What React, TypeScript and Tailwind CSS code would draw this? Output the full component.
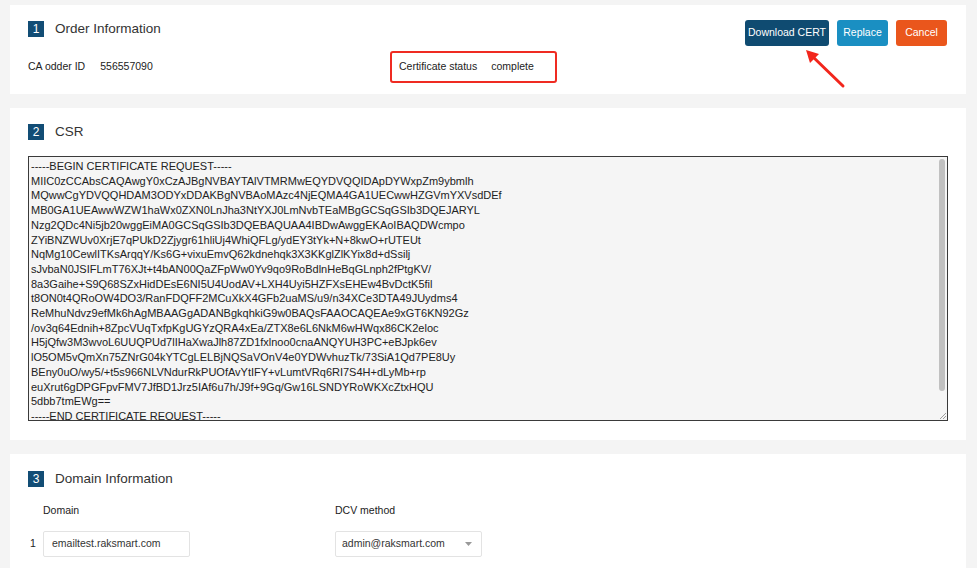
import React from 'react';

const csrLines = [
  '-----BEGIN CERTIFICATE REQUEST-----',
  'MIIC0zCCAbsCAQAwgY0xCzAJBgNVBAYTAlVTMRMwEQYDVQQIDApDYWxpZm9ybmlh',
  'MQwwCgYDVQQHDAM3ODYxDDAKBgNVBAoMAzc4NjEQMA4GA1UECwwHZGVmYXVsdDEf',
  'MB0GA1UEAwwWZW1haWx0ZXN0LnJha3NtYXJ0LmNvbTEaMBgGCSqGSIb3DQEJARYL',
  'Nzg2QDc4Ni5jb20wggEiMA0GCSqGSIb3DQEBAQUAA4IBDwAwggEKAoIBAQDWcmpo',
  'ZYiBNZWUv0XrjE7qPUkD2Zjygr61hliUj4WhiQFLg/ydEY3tYk+N+8kwO+rUTEUt',
  'NqMg10CewlITKsArqqY/Ks6G+vixuEmvQ62kdnehqk3X3KKglZlKYix8d+dSsilj',
  'sJvbaN0JSIFLmT76XJt+t4bAN00QaZFpWw0Yv9qo9RoBdlnHeBqGLnph2fPtgKV/',
  '8a3Gaihe+S9Q68SZxHidDEsE6NI5U4UodAV+LXH4Uyi5HZFXsEHEw4BvDctK5fil',
  't8ON0t4QRoOW4DO3/RanFDQFF2MCuXkX4GFb2uaMS/u9/n34XCe3DTA49JUydms4',
  'ReMhuNdvz9efMk6hAgMBAAGgADANBgkqhkiG9w0BAQsFAAOCAQEAe9xGT6KN92Gz',
  '/ov3q64Ednih+8ZpcVUqTxfpKgUGYzQRA4xEa/ZTX8e6L6NkM6wHWqx86CK2eloc',
  'H5jQfw3M3wvoL6UUQPUd7lIHaXwaJlh87ZD1fxlnoo0cnaANQYUH3PC+eBJpk6ev',
  'lO5OM5vQmXn75ZNrG04kYTCgLELBjNQSaVOnV4e0YDWvhuzTk/73SiA1Qd7PE8Uy',
  'BEny0uO/wy5/+t5s966NLVNdurRkPUOfAvYtIFY+vLumtVRq6RI7S4H+dLyMb+rp',
  'euXrut6gDPGFpvFMV7JfBD1Jrz5IAf6u7h/J9f+9Gq/Gw16LSNDYRoWKXcZtxHQU',
  '5dbb7tmEWg==',
  '-----END CERTIFICATE REQUEST-----',
];

function SectionTitle({ num, title }: { num: string; title: string }) {
  return (
    <div className="flex items-center">
      <span className="flex h-4 w-4 items-center justify-center bg-[#124d75] text-[12px] leading-none text-white">
        {num}
      </span>
      <span className="ml-[11px] text-[13.5px] leading-none text-[#333]">{title}</span>
    </div>
  );
}

export default function App() {
  return (
    <div
      className="relative min-h-[568px] w-[977px] overflow-hidden bg-[#f4f4f4] pt-[5px] text-[#222]"
      style={{ fontFamily: '"Liberation Sans", Arial, sans-serif' }}
    >
      {/* 1 Order information */}
      <div className="mx-[10px] mr-[11px] flex h-[89px] justify-between bg-white pl-[18px] pr-[19px] pt-[16px]">
        <div>
          <SectionTitle num="1" title="Order Information" />
          <div className="mt-[14px] flex items-center text-[10.5px]">
            <div className="flex w-[362px] items-center">
              <span>CA odder ID</span>
              <span className="ml-[15px]">556557090</span>
            </div>
            <div className="flex h-[32px] w-[167px] items-center rounded-[3px] border-2 border-[#ef2b22] pl-[7px]">
              <span>Certificate status</span>
              <span className="ml-[14px]">complete</span>
            </div>
          </div>
        </div>
        <div className="-mt-px flex gap-2 text-[10.5px] text-white">
          <button className="h-[26px] w-[84px] rounded-[3px] bg-[#0f4b71]">Download CERT</button>
          <button className="h-[26px] w-[51px] rounded-[3px] bg-[#1a8fc2]">Replace</button>
          <button className="h-[26px] w-[51px] rounded-[3px] bg-[#ea561c]">Cancel</button>
        </div>
      </div>

      {/* 2 CSR */}
      <div className="mx-[10px] mr-[11px] mt-[14px] h-[332px] bg-white pl-[18px] pr-[18px] pt-[16px]">
        <SectionTitle num="2" title="CSR" />
        <div className="mt-[16px] flex h-[265px] border border-[#3a3a3a] bg-[#f5f5f5]">
          <div className="flex-1 overflow-hidden pl-[2px] pt-[2px] text-[11px] leading-[14.7px] text-[#222]">
            {csrLines.map((l, i) => (
              <div key={i} className="whitespace-nowrap">{l}</div>
            ))}
          </div>
          <div className="flex w-[10px] flex-col">
            <div className="mx-[2px] mt-[2px] h-[232px] rounded-full bg-[#c1c1c1]" />
            <div className="flex-1" />
            <svg width="10" height="10" viewBox="0 0 10 10" className="shrink-0">
              <path d="M9 3 L3 9 M9 6 L6 9" stroke="#888" strokeWidth="0.8" />
            </svg>
          </div>
        </div>
      </div>

      {/* 3 Domain */}
      <div className="mx-[10px] mr-[11px] mt-[14px] h-[130px] bg-white pl-[18px] pt-[17px]">
        <SectionTitle num="3" title="Domain Information" />
        <div className="mt-[16px] flex text-[10.5px]">
          <div className="ml-[15px] w-[292px]">Domain</div>
          <div>DCV method</div>
        </div>
        <div className="mt-[12px] flex items-center text-[10.5px]">
          <span className="w-[15px] pl-[2px]">1</span>
          <div className="flex h-[26px] w-[147px] items-center rounded-[2px] border border-[#e3e3e3] pl-[8px] text-[#333]">
            emailtest.raksmart.com
          </div>
          <div className="ml-[145px] flex h-[26px] w-[147px] items-center justify-between rounded-[2px] border border-[#e3e3e3] pl-[6px] pr-[9px] text-[#333]">
            <span>admin@raksmart.com</span>
            <svg width="7" height="4" viewBox="0 0 7 4">
              <path d="M0 0 H7 L3.5 4 Z" fill="#999" />
            </svg>
          </div>
        </div>
      </div>

      <div className="pointer-events-none absolute bottom-0 left-0 h-[10px] w-full bg-gradient-to-b from-transparent to-[#00000010]" />

      {/* red arrow annotation */}
      <svg className="pointer-events-none absolute left-[800px] top-[44px]" width="50" height="46" viewBox="0 0 50 46">
        <path d="M43 42 L11 11" stroke="#f2261c" strokeWidth="3" strokeLinecap="round" />
        <path d="M6 6 L19 10 L10 19 Z" fill="#f2261c" />
      </svg>
    </div>
  );
}
